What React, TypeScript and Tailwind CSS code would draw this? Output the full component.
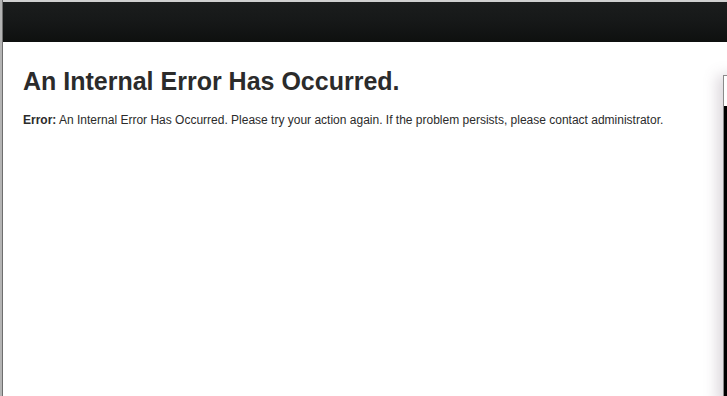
export default function App() {
  return (
    <div className="relative h-[396px] w-[727px] overflow-hidden bg-white font-['Liberation_Sans',Arial,sans-serif]">
      <div className="flex h-full">
        {/* left frame edge */}
        <div className="w-[2px] bg-[#b4b4b4]" />
        <div className="w-px bg-[#6e6e6e]" />
        <div className="flex flex-1 flex-col">
          <div className="h-[2px] bg-[#d0d0d0]" />
          <header className="h-[40px] bg-gradient-to-b from-[#1b1d1d] via-[#161818] to-[#0e100f]" />
          <main className="flex-1 pl-[20px] pt-[24px]">
            <h1 className="text-[25px] font-bold leading-[30px] text-[#2b2b2b]">
              An Internal Error Has Occurred.
            </h1>
            <p className="mt-[17px] text-[12px] leading-[15px] text-[#2b2b2b]">
              <b>Error:</b> An Internal Error Has Occurred. Please try your action again. If the
              problem persists, please contact administrator.
            </p>
          </main>
        </div>
      </div>

      {/* overlapping panel at the right edge */}
      <div className="absolute left-[723px] top-[75px] h-[330px] w-[40px] border-l border-t border-[#8a8a8a] bg-white shadow-[-6px_0_14px_rgba(120,100,120,0.25)]">
        <div className="mt-[30px] h-[300px] bg-black" />
      </div>
    </div>
  );
}
